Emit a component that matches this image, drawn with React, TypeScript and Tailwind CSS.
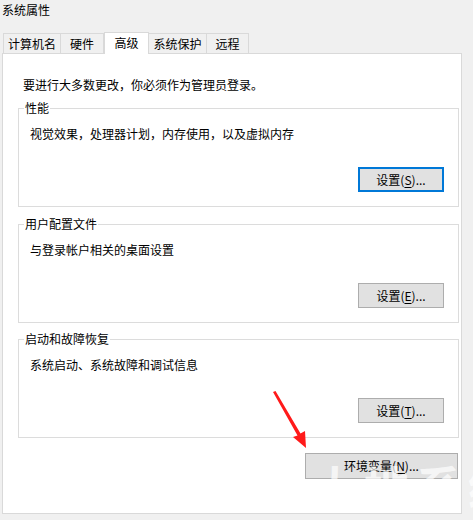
import React from "react";

const font = {
  fontFamily: '"Noto Sans CJK SC", "Microsoft YaHei", "Noto Sans", sans-serif',
};

type TabProps = { label: string; width: string; active?: boolean; first?: boolean };

function Tab({ label, width, active, first }: TabProps) {
  if (active) {
    return (
      <div
        className={`${width} h-[22px] bg-white border border-b-0 border-[#d9d9d9] flex items-start justify-center pt-[2px] text-[12px] leading-[16px] text-black relative z-10 -mb-px`}
      >
        {label}
      </div>
    );
  }
  return (
    <div
      className={`${width} h-[20px] bg-[#f0f0f0] border-t border-r ${first ? "border-l" : ""} border-[#d9d9d9] flex items-center justify-center text-[12px] leading-[16px] text-black`}
    >
      {label}
    </div>
  );
}

function WinButton({
  text,
  hotkey,
  width,
  isDefault,
}: {
  text: string;
  hotkey: string;
  width: string;
  isDefault?: boolean;
}) {
  return (
    <button
      className={`${width} h-[25px] bg-[#e1e1e1] ${
        isDefault ? "border-2 border-[#0078d7]" : "border border-[#adadad]"
      } flex items-center justify-center text-[12px] leading-[16px] text-black`}
    >
      {text}(<span className="underline underline-offset-2">{hotkey}</span>)...
    </button>
  );
}

function GroupBox({
  title,
  desc,
  hotkey,
  isDefault,
  className,
}: {
  title: string;
  desc: string;
  hotkey: string;
  isDefault?: boolean;
  className?: string;
}) {
  return (
    <div className={`relative w-[441px] h-[99px] border border-[#dcdcdc] ml-[15px] ${className ?? ""}`}>
      <span className="absolute -top-[9px] left-[5px] bg-white px-[1px] text-[12px] leading-[16px] text-black">
        {title}
      </span>
      <div className="pt-[17px] pl-[11px] text-[12px] leading-[16px] text-black">{desc}</div>
      <div className="flex justify-end pr-[14px] mt-[25px]">
        <WinButton text="设置" hotkey={hotkey} width="w-[86px]" isDefault={isDefault} />
      </div>
    </div>
  );
}

export default function App() {
  return (
    <div className="relative w-[473px] h-[520px] bg-[#f0f0f0] overflow-hidden" style={font}>
      <div className="h-[31px] pl-[2px] pt-[2px] text-[12px] leading-[16px] text-black">系统属性</div>

      <div className="flex items-end pl-[3px] h-[22px]">
        <Tab label="计算机名" width="w-[58px]" first />
        <Tab label="硬件" width="w-[43px]" />
        <Tab label="高级" width="w-[45px]" active />
        <Tab label="系统保护" width="w-[58px]" />
        <Tab label="远程" width="w-[42px]" />
      </div>

      <div className="ml-[2px] w-[460px] h-[461px] bg-white border border-[#d9d9d9]">
        <div className="pt-[23px] pl-[20px] text-[12px] leading-[16px] text-black">
          要进行大多数更改，你必须作为管理员登录。
        </div>
        <GroupBox
          className="mt-[15px]"
          title="性能"
          desc="视觉效果，处理器计划，内存使用，以及虚拟内存"
          hotkey="S"
          isDefault
        />
        <GroupBox className="mt-[17px]" title="用户配置文件" desc="与登录帐户相关的桌面设置" hotkey="E" />
        <GroupBox className="mt-[16px]" title="启动和故障恢复" desc="系统启动、系统故障和调试信息" hotkey="T" />
        <div className="flex justify-end mr-[3px] mt-[15px]">
          <button className="w-[153px] h-[26px] bg-[#e1e1e1] border border-[#adadad] flex items-center justify-center text-[12px] leading-[16px] text-black">
            环境变量(<span className="underline underline-offset-2">N</span>)...
          </button>
        </div>
      </div>

      {/* site watermark */}
      <div className="absolute left-[312px] top-[457px] text-[46px] leading-[56px] font-bold text-white/70 tracking-[6px] pointer-events-none whitespace-nowrap">
        大地系统
      </div>

      {/* red pointer arrow */}
      <svg className="absolute inset-0 pointer-events-none" width="473" height="520" viewBox="0 0 473 520">
        <polygon
          points="273,392 275.5,391 300.5,433.5 305,431 306,448 293,437 297.5,435.5"
          fill="#ff1a1a"
        />
      </svg>
    </div>
  );
}
